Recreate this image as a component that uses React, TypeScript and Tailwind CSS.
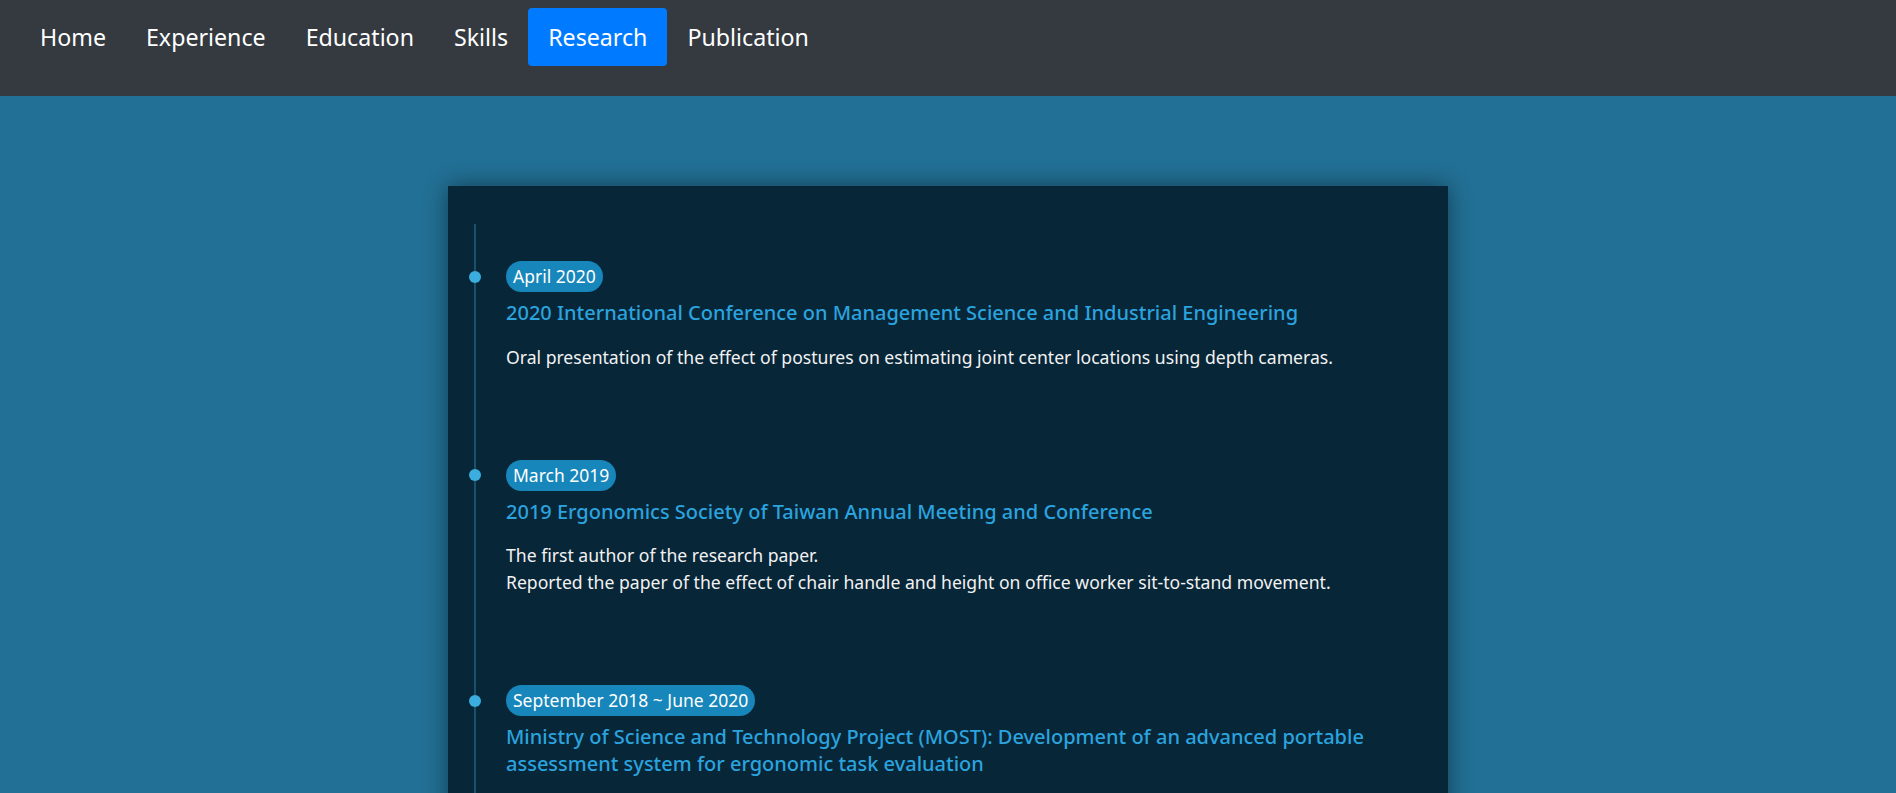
import React from "react";

const navItems = ["Home", "Experience", "Education", "Skills", "Research", "Publication"];

type Item = { date: string; title: string; desc: string[] };

const items: Item[] = [
  {
    date: "April 2020",
    title: "2020 International Conference on Management Science and Industrial Engineering",
    desc: ["Oral presentation of the effect of postures on estimating joint center locations using depth cameras."],
  },
  {
    date: "March 2019",
    title: "2019 Ergonomics Society of Taiwan Annual Meeting and Conference",
    desc: [
      "The first author of the research paper.",
      "Reported the paper of the effect of chair handle and height on office worker sit-to-stand movement.",
    ],
  },
  {
    date: "September 2018 ~ June 2020",
    title:
      "Ministry of Science and Technology Project (MOST): Development of an advanced portable assessment system for ergonomic task evaluation",
    desc: [],
  },
];

export default function App() {
  return (
    <div
      className="min-h-screen bg-[#227095] overflow-hidden"
      style={{ fontFamily: '"Noto Sans", "Open Sans", sans-serif' }}
    >
      <nav className="h-[96px] bg-[#343a40] flex items-start pt-[8px] pl-[20px]">
        {navItems.map((n) => (
          <a
            key={n}
            className={
              "h-[58px] px-[20px] pt-[1px] flex items-center text-[23.2px] text-white rounded-[4px] " +
              (n === "Research" ? "bg-[#007bff]" : "")
            }
          >
            {n}
          </a>
        ))}
      </nav>
      <main className="pt-[90px]">
        <div className="w-[1000px] mx-auto bg-[#072638] shadow-[0_0_22px_rgba(0,0,0,0.45)] pl-[26px] pr-[60px] pt-[38px] pb-[200px]">
          <div className="border-l-2 border-[#18506e]">
            {items.map((it) => (
              <div key={it.date} className="relative pl-[30px] pt-[37px] pb-[52px]">
                <span className="absolute left-[-7px] top-[46.5px] w-[12px] h-[12px] rounded-full bg-[#3badde]" />
                <div className="inline-flex h-[31px] items-center px-[7px] rounded-full bg-[#1786ba] text-white text-[17.5px]">
                  {it.date}
                </div>
                <h3 className="mt-[8px] text-[20px] leading-[26.5px] font-medium text-[#2ba3de]">{it.title}</h3>
                {it.desc.length > 0 && (
                  <div className="mt-[17px] text-[17.6px] leading-[27px] text-[#f2f2f2]">
                    {it.desc.map((d) => (
                      <p key={d}>{d}</p>
                    ))}
                  </div>
                )}
              </div>
            ))}
          </div>
        </div>
      </main>
    </div>
  );
}
